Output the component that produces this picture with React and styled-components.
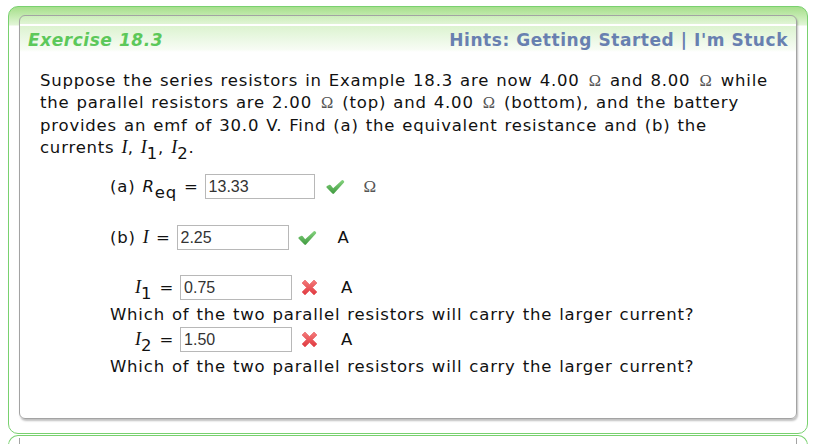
import React from "react";
import styled, { createGlobalStyle } from "styled-components";

const GlobalStyle = createGlobalStyle`
  html, body {
    margin: 0;
    padding: 0;
    background: #fff;
  }
  body {
    font-family: "DejaVu Sans", Verdana, sans-serif;
    color: #111;
  }
`;

const Check = () => (
  <svg width="20" height="17" viewBox="0 0 20 17">
    <defs>
      <linearGradient id="ck" x1="0" y1="0" x2="0" y2="1">
        <stop offset="0" stopColor="#86d37f" />
        <stop offset="1" stopColor="#3f9a3f" />
      </linearGradient>
    </defs>
    <path
      d="M1.5 9.5 Q1 8.5 2 8 L4.5 6.8 Q5.3 6.5 5.8 7.2 L8.2 10.2 L16.8 2.2 Q17.5 1.6 18.2 2.3 L19 3.2 Q19.5 3.9 19 4.5 L9 15.5 Q8.2 16.3 7.4 15.5 Z"
      fill="url(#ck)"
    />
  </svg>
);

const Cross = () => (
  <svg width="17" height="17" viewBox="0 0 17 17">
    <defs>
      <linearGradient id="cx" x1="0" y1="0" x2="0" y2="1">
        <stop offset="0" stopColor="#f47b7b" />
        <stop offset="1" stopColor="#e0383f" />
      </linearGradient>
    </defs>
    <path
      d="M1 4 L4 1 L8.5 5.5 L13 1 L16 4 L11.5 8.5 L16 13 L13 16 L8.5 11.5 L4 16 L1 13 L5.5 8.5 Z"
      fill="url(#cx)"
      stroke="#e65a5f"
      strokeWidth="0.6"
      strokeLinejoin="round"
    />
  </svg>
);

function AnswerRow({ label, value, inputWidth, ok, unit, indent, gap, unitGap }) {
  return (
    <Row $indent={indent}>
      <Label>{label}</Label>
      <Field value={value} readOnly $w={inputWidth} />
      <Mark $gap={gap}>{ok ? <Check /> : <Cross />}</Mark>
      <Unit $gap={unitGap}>{unit}</Unit>
    </Row>
  );
}

export default function App() {
  return (
    <>
      <GlobalStyle />
      <Page>
        <Card>
          <Panel>
            <Header>
              <Title>Exercise 18.3</Title>
              <Hints>Hints: Getting Started | I'm Stuck</Hints>
            </Header>
            <Body>
              <Problem>
                Suppose the series resistors in Example 18.3 are now 4.00 <Ohm>Ω</Ohm> and
                8.00 <Ohm>Ω</Ohm> while the parallel resistors are 2.00 <Ohm>Ω</Ohm> (top)
                and 4.00 <Ohm>Ω</Ohm> (bottom), and the battery provides an emf of 30.0 V.
                Find (a) the equivalent resistance and (b) the currents <MathI>I</MathI>,{" "}
                <MathI>I</MathI>
                <Sub>1</Sub>, <MathI>I</MathI>
                <Sub>2</Sub>.
              </Problem>
              <Answers>
                <AnswerRow
                  indent={70}
                  label={
                    <>
                      (a) <SansI>R</SansI>
                      <Sub>eq</Sub> =
                    </>
                  }
                  value="13.33"
                  inputWidth={110}
                  ok
                  gap={10}
                  unitGap={19}
                  unit={<UnitOhm>Ω</UnitOhm>}
                />
                <Spacer $h={25} />
                <AnswerRow
                  indent={70}
                  label={
                    <>
                      (b) <MathI>I</MathI> =
                    </>
                  }
                  value="2.25"
                  inputWidth={112}
                  ok
                  gap={8}
                  unitGap={21}
                  unit="A"
                />
                <Spacer $h={24} />
                <AnswerRow
                  indent={95}
                  label={
                    <>
                      <MathI>I</MathI>
                      <Sub>1</Sub> =
                    </>
                  }
                  value="0.75"
                  inputWidth={112}
                  gap={9}
                  unitGap={20}
                  unit="A"
                />
                <Question>Which of the two parallel resistors will carry the larger current?</Question>
                <AnswerRow
                  indent={95}
                  label={
                    <>
                      <MathI>I</MathI>
                      <Sub>2</Sub> =
                    </>
                  }
                  value="1.50"
                  inputWidth={112}
                  gap={9}
                  unitGap={20}
                  unit="A"
                />
                <Question>Which of the two parallel resistors will carry the larger current?</Question>
              </Answers>
            </Body>
          </Panel>
        </Card>
        <NextCard>
          <NextPanel />
        </NextCard>
      </Page>
    </>
  );
}

const Page = styled.div`
  padding: 6px 0 0 8px;
  width: 800px;
`;

const Card = styled.div`
  box-sizing: border-box;
  width: 800px;
  height: 428px;
  border: 1px solid #79d16f;
  border-radius: 10px;
  padding: 8px 10px 0 10px;
  background: linear-gradient(#a7df8c 0px, #c6ecb3 10px, #e2f5d8 18px, #fff 19px);
`;

const Panel = styled.div`
  box-sizing: border-box;
  height: 404px;
  border: 1px solid #a3a3a3;
  border-radius: 6px;
  box-shadow: 1px 2px 2px rgba(0, 0, 0, 0.25);
  background: linear-gradient(
    rgba(210, 240, 195, 0.6) 0px,
    rgba(225, 245, 215, 0.6) 8px,
    #fff 8px
  );
  padding-top: 10px;
  overflow: hidden;
`;

const Header = styled.div`
  display: flex;
  justify-content: space-between;
  align-items: center;
  height: 24px;
  padding: 2px 8px 0 8px;
  background: linear-gradient(#dcf3d0, #f7fcf4 90%, #fff);
  font-family: Verdana, "DejaVu Sans", sans-serif;
  font-weight: bold;
  font-size: 17px;
  letter-spacing: 0.55px;
`;

const Title = styled.span`
  color: #5cc85a;
  font-style: italic;
`;

const Hints = styled.span`
  color: #6880b0;
`;

const Body = styled.div`
  padding: 18px 12px 0 20px;
  font-size: 16.5px;
  line-height: 23px;
  letter-spacing: 0.8px;
  word-spacing: 1px;
`;

const Problem = styled.p`
  margin: 0;
  line-height: 22.4px;
`;

const Ohm = styled.span`
  font-family: "Liberation Serif", serif;
  color: #555;
  line-height: 0;
  letter-spacing: 0;
  padding: 0 2px;
`;

const UnitOhm = styled(Ohm)`
  font-size: 17px;
  padding: 0;
`;

const MathI = styled.span`
  font-family: "Liberation Serif", serif;
  font-style: italic;
  font-size: 1.1em;
  line-height: 0;
  letter-spacing: 0;
`;

const SansI = styled.span`
  font-style: italic;
`;

const Sub = styled.sub`
  font-size: 1em;
  vertical-align: -6px;
  line-height: 0;
`;

const Answers = styled.div`
  padding-top: 14px;
`;

const Row = styled.div`
  display: flex;
  align-items: center;
  height: 26px;
  padding-left: ${(p) => p.$indent}px;
`;

const Label = styled.span`
  margin-right: 6px;
  white-space: nowrap;
`;

const Field = styled.input`
  box-sizing: border-box;
  width: ${(p) => p.$w}px;
  height: 25px;
  border: 1px solid #b8b8b8;
  padding: 0 3px;
  font-family: "Liberation Sans", Arial, sans-serif;
  font-size: 16px;
  letter-spacing: 0;
  color: #333;
  outline: none;
`;

const Mark = styled.span`
  display: flex;
  align-items: center;
  margin-left: ${(p) => p.$gap}px;
  width: 20px;
`;

const Unit = styled.span`
  margin-left: ${(p) => p.$gap}px;
`;

const Spacer = styled.div`
  height: ${(p) => p.$h}px;
`;

const Question = styled.div`
  padding-left: 70px;
  margin-top: 2px;
  height: 24px;
  line-height: 24px;
`;

const NextCard = styled.div`
  margin-top: 1px;
  height: 20px;
  border: 1px solid #79d16f;
  border-bottom: none;
  border-radius: 10px 10px 0 0;
  padding: 2px 10px 0;
`;

const NextPanel = styled.div`
  height: 20px;
  border-left: 1px solid #a3a3a3;
  border-right: 1px solid #a3a3a3;
`;
